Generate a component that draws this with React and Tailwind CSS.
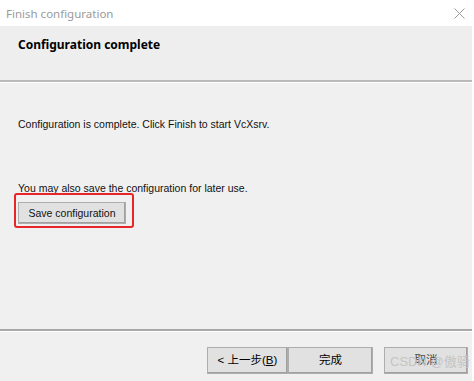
import React from 'react'

function WinButton({ children, className = '' }) {
  return (
    <button
      className={`bg-[#e1e1e1] border border-[#adadad] shadow-[inset_-1px_-1px_0_#a0a0a0] leading-none flex items-center justify-center ${className}`}
    >
      {children}
    </button>
  )
}

export default function App() {
  return (
    <div
      className="w-[474px] h-[381px] bg-white flex flex-col overflow-hidden"
      style={{ fontFamily: '"Liberation Sans", "Noto Sans CJK SC", sans-serif' }}
    >
      {/* Title bar */}
      <div className="h-[26px] shrink-0 flex items-center justify-between pl-[6px] pr-[9px] bg-white">
        <span className="text-[11.5px] leading-[17px] text-[#9a9a9a]" style={{ fontFamily: '"Noto Sans", sans-serif' }}>
          Finish configuration
        </span>
        <svg width="11" height="11" viewBox="0 0 11 11" className="mt-[1px]">
          <path d="M0.5 0.5 L10.5 10.5 M10.5 0.5 L0.5 10.5" stroke="#9a9a9a" strokeWidth="1" />
        </svg>
      </div>

      <div className="flex-1 flex flex-col mr-[2px] min-h-0">
        {/* Header */}
        <div className="h-[56px] shrink-0 bg-[#eeeeee] pl-[18px] pt-[10px] border-b-[2px] border-[#b9b9b9]">
          <div className="text-[12px] leading-[17px] font-bold text-black" style={{ fontFamily: '"Noto Sans", sans-serif' }}>
            Configuration complete
          </div>
        </div>

        {/* Body */}
        <div className="h-[249px] shrink-0 bg-[#f0f0f0] border-t border-white pl-[18px] pt-[34px] flex flex-col border-b-[2px] border-b-[#a9a9a9]">
          <p className="text-[10.5px] leading-[14px] text-[#111]">
            Configuration is complete. Click Finish to start VcXsrv.
          </p>
          <p className="text-[10.5px] leading-[14px] text-[#111] mt-[50px]">
            You may also save the configuration for later use.
          </p>
          <div className="relative mt-[7px] w-[108px]">
            <WinButton className="w-[108px] h-[22px] text-[10.5px] text-[#111]">Save configuration</WinButton>
            <div className="absolute left-[-4px] top-[-9px] w-[120px] h-[35px] border-[2px] border-[#e8262a] rounded-[3px]" />
          </div>
        </div>

        {/* Footer */}
        <div className="flex-1 bg-[#f0f0f0] border-t border-white flex items-start pt-[15px] pl-[207px]">
          <WinButton className="w-[81px] h-[27px] text-[11.5px] text-black">
            &lt; 上一步(<span className="underline">B</span>)
          </WinButton>
          <WinButton className="w-[85px] h-[27px] text-[11.5px] text-black">完成</WinButton>
          <div className="relative ml-[11px]">
            <WinButton className="w-[84px] h-[27px] text-[11.5px] text-[#444]">取消</WinButton>
            <span className="absolute left-[6px] top-[7px] text-[13px] leading-[15px] text-[#c4c4c4] whitespace-nowrap">
              CSDN @傲骑
            </span>
          </div>
        </div>
      </div>
    </div>
  )
}
